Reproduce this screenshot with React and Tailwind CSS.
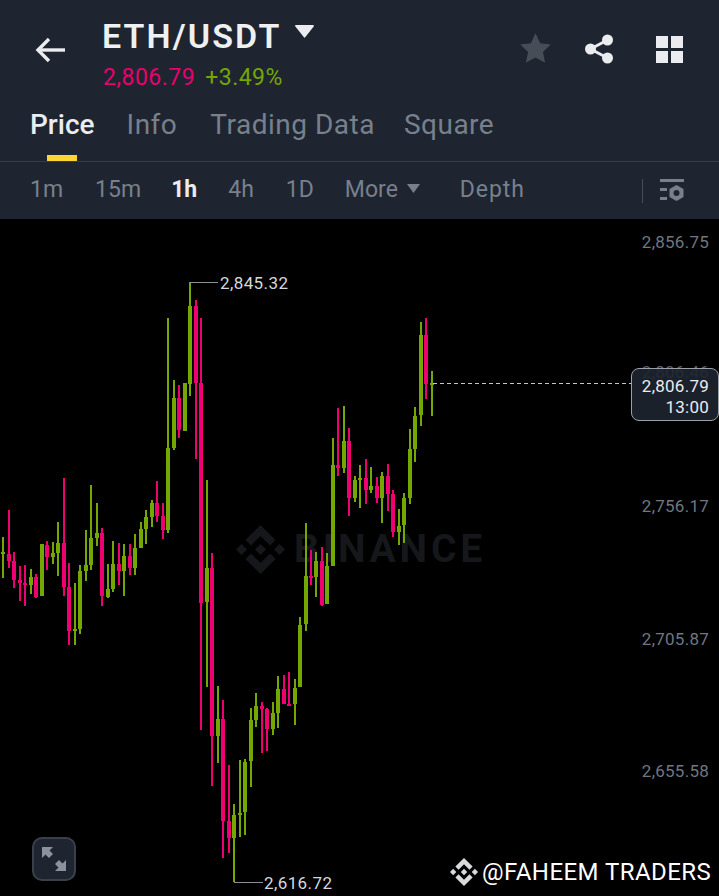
import { Fragment } from 'react';

const PINK = '#ee0070';
const GREEN = '#74a700';

// [x, wickTop, wickBottom, bodyTop, bodyBottom, up]
const candles = [
  [3, 537, 578, 552, 554, 1], [8.5, 510, 568, 554, 561, 0], [14, 552, 588, 561, 580, 0], [19.5, 566, 601, 580, 583, 0],
  [25, 565, 606, 583, 585, 0], [30.5, 569, 594, 577, 585, 1], [36, 574, 598, 577, 597, 0], [41.5, 544, 596, 544, 596, 1],
  [47, 541, 570, 545, 557, 0], [52.5, 542, 564, 553, 557, 1], [58, 522, 576, 543, 553, 1], [63.5, 478, 596, 543, 587, 0],
  [69, 563, 645, 587, 631, 0], [74.5, 583, 645, 629, 631, 1], [80, 565, 634, 571, 629, 1], [85.5, 530, 581, 565, 571, 1],
  [91, 485, 570, 538, 565, 1], [96.5, 503, 546, 533, 538, 1], [102, 528, 606, 533, 596, 0], [107.5, 564, 598, 589, 597, 1],
  [113, 541, 592, 564, 589, 1], [118.5, 543, 585, 564, 571, 0], [124, 544, 596, 556, 571, 1], [129.5, 544, 575, 556, 568, 0],
  [135, 534, 575, 548, 568, 1], [140.5, 522, 548, 529, 548, 1], [146, 510, 544, 517, 529, 1], [151.5, 500, 527, 503, 517, 1],
  [157, 481, 522, 503, 516, 0], [162.5, 503, 539, 516, 530, 0], [168, 318, 533, 448, 530, 1], [173.5, 380, 450, 398, 448, 1],
  [179, 385, 438, 398, 430, 0], [184.5, 383, 431, 383, 431, 1], [190, 282, 396, 306, 384, 1], [195.5, 300, 459, 306, 383, 0],
  [201, 318, 730, 383, 603, 0], [206.5, 480, 687, 568, 602, 1], [212, 553, 786, 568, 736, 0], [217.5, 686, 763, 719, 736, 1],
  [223, 700, 858, 719, 821, 0], [228.5, 765, 853, 821, 838, 0], [234, 804, 882, 815, 838, 1], [239.5, 760, 837, 813, 815, 1],
  [245, 759, 835, 762, 812, 1], [250.5, 708, 787, 720, 761, 1], [256, 693, 727, 706, 720, 1], [261.5, 702, 753, 706, 709, 0],
  [267, 708, 751, 709, 729, 0], [272.5, 702, 735, 713, 729, 1], [278, 676, 728, 689, 713, 1], [283.5, 675, 704, 689, 704, 0],
  [289, 672, 706, 704, 706, 0], [294.5, 679, 725, 688, 704, 1], [300, 617, 687, 625, 687, 1], [305.5, 523, 631, 576, 624, 1],
  [310.5, 550, 585, 576, 578, 0], [316, 552, 597, 561, 577, 1], [321.5, 547, 606, 561, 605, 0], [327, 553, 604, 566, 604, 1],
  [332.5, 438, 566, 465, 566, 1], [338, 408, 476, 465, 468, 0], [343.5, 406, 473, 441, 468, 1], [349, 428, 516, 441, 498, 0],
  [354.5, 476, 502, 480, 498, 1], [360, 465, 508, 478, 480, 1], [365.5, 459, 504, 478, 490, 0], [371, 467, 493, 486, 490, 1],
  [376.5, 477, 503, 486, 498, 0], [382, 472, 523, 476, 498, 1], [387.5, 464, 511, 476, 494, 0], [393, 490, 537, 494, 532, 0],
  [398.5, 509, 545, 526, 532, 1], [404, 493, 543, 498, 525, 1], [409.5, 429, 504, 449, 498, 1], [415, 407, 462, 416, 449, 1],
  [420.5, 322, 426, 335, 415, 1], [426, 318, 399, 335, 384, 0], [431.5, 371, 416, 383, 384, 1],
];

const axisLabels = [
  { text: '2,856.75', top: 13 },
  { text: '2,756.17', top: 277 },
  { text: '2,705.87', top: 410 },
  { text: '2,655.58', top: 542 },
];

function BinanceLogo({ className, fill }) {
  return (
    <svg viewBox="0 0 126.61 126.61" className={className} fill={fill}>
      <path d="M38.73 53.2l24.59-24.58 24.6 24.6 14.3-14.31L63.32 0 24.42 38.9l14.31 14.3z" />
      <path d="M0 63.31l14.3-14.31 14.31 14.31-14.31 14.3z" />
      <path d="M38.73 73.41l24.59 24.59 24.6-24.6 14.31 14.29-38.9 38.91-38.91-38.88v-.03l14.31-14.28z" />
      <path d="M98.28 63.31l14.3-14.31 14.31 14.3-14.31 14.3z" />
      <path d="M77.83 63.3L63.32 48.78 52.59 59.51l-1.24 1.23-2.54 2.54 14.51 14.5 14.51-14.47z" />
    </svg>
  );
}

function Candles() {
  // y values above are page coordinates, chart starts at y=219
  return (
    <svg width="719" height="677" viewBox="0 219 719 677" className="absolute left-0 top-0">
      {candles.map(([x, wt, wb, bt, bb, up], i) => {
        const color = up ? GREEN : PINK;
        return (
          <Fragment key={i}>
            <rect x={Math.round(x) - 1} y={wt} width="2" height={wb - wt} fill={color} />
            <rect x={Math.round(x) - 2} y={bt} width="4" height={Math.max(bb - bt, 2)} fill={color} />
          </Fragment>
        );
      })}
      <path d="M190 282.5H218" stroke="#8a9099" strokeWidth="1" />
      <path d="M234 882.5H263" stroke="#8a9099" strokeWidth="1" />
      <path d="M433 383.5H631" stroke="#c4c8cc" strokeWidth="1" strokeDasharray="4 3" />
    </svg>
  );
}

export default function App() {
  return (
    <div className="w-[719px] h-[896px] flex flex-col bg-black overflow-hidden" style={{ fontFamily: 'Roboto, "Noto Sans", sans-serif' }}>
      <div className="h-[219px] shrink-0 bg-[#1e2530] flex flex-col">
        {/* Title row */}
        <div className="h-[100px] flex">
          <div className="w-[102px] pl-[35px] pt-[37px] shrink-0">
            <svg width="31" height="26" viewBox="0 0 31 26" fill="none" stroke="#eaecef" strokeWidth="3.4">
              <path d="M30 13H3" />
              <path d="M14 2L3 13l11 11" />
            </svg>
          </div>
          <div className="flex-1 pt-[15px]">
            <div className="flex items-start">
              <span className="text-[34px] leading-[42px] font-semibold text-[#eef0f2] tracking-[2.100px]">ETH/USDT</span>
              <svg width="19" height="14" viewBox="0 0 19 14" className="ml-[14px] mt-[9px]" fill="#eaecef">
                <path d="M1 1h17a1 1 0 0 1 .7 1.6L10.4 13a1 1 0 0 1-1.7 0L.4 2.6A1 1 0 0 1 1 1z" />
              </svg>
            </div>
            <div className="flex mt-[7px] pl-px text-[23px] leading-[28px] tracking-[0.5px]">
              <span style={{ color: '#e8006c' }}>2,806.79</span>
              <span className="ml-[10px]" style={{ color: GREEN }}>+3.49%</span>
            </div>
          </div>
          <div className="flex pt-[32px] pr-[36px] shrink-0">
            <svg width="35" height="35" viewBox="0 0 24 24" fill="#474d57" className="-mt-[1px]">
              <path d="M12 1.5l3.2 6.9 7.3.9-5.4 5.1 1.5 7.4L12 18.1l-6.6 3.7 1.5-7.4L1.500 9.300l7.300-.9z" />
            </svg>
            <svg width="30" height="32" viewBox="0 0 30 32" fill="#eaecef" stroke="#eaecef" className="ml-[31px] mt-[1px]">
              <circle cx="6.500" cy="16" r="5.500" stroke="none" />
              <circle cx="23.500" cy="7" r="5.500" stroke="none" />
              <circle cx="23.500" cy="25" r="5.500" stroke="none" />
              <path d="M6.500 16L23.500 7M6.500 16l17 9" strokeWidth="3" fill="none" />
            </svg>
            <div className="ml-[42px] mt-[4px] grid grid-cols-2 gap-[3px] w-[27px] h-[27px]">
              <div className="bg-[#eaecef] h-[12px]" />
              <div className="bg-[#eaecef] h-[12px]" />
              <div className="bg-[#eaecef] h-[12px]" />
              <div className="bg-[#eaecef] h-[12px]" />
            </div>
          </div>
        </div>

        {/* Tabs */}
        <div className="h-[62px] border-b border-[#363c45] flex pl-[30px] items-start text-[28px] leading-[50px] text-[#78808c] tracking-[0.5px]">
          <div className="flex flex-col items-center tracking-normal">
            <span className="text-[#eaecef] font-medium">Price</span>
            <div className="w-[30px] h-[6px] bg-[#fcd535] mt-[5px]" />
          </div>
          <span className="ml-[32px]">Info</span>
          <span className="ml-[33px]">Trading Data</span>
          <span className="ml-[29px]">Square</span>
        </div>

        {/* Interval bar */}
        <div className="flex-1 flex items-center pl-[30px] text-[23px] text-[#78808c]">
          <span>1m</span>
          <span className="ml-[32px]">15m</span>
          <span className="ml-[30px] text-[#eaecef] font-bold">1h</span>
          <span className="ml-[31px]">4h</span>
          <span className="ml-[32px]">1D</span>
          <span className="ml-[31px]">More</span>
          <svg width="13" height="10" viewBox="0 0 13 10" className="ml-[9px] -mt-[4px]" fill="#78808c">
            <path d="M0 0h13L6.500 9z" />
          </svg>
          <span className="ml-[40px] tracking-[0.9px]">Depth</span>
          <div className="ml-auto w-px h-[24px] bg-[#474d57]" />
          <svg width="24" height="24" viewBox="0 0 24 24" fill="#78808c" className="ml-[17px] mr-[35px]">
            <rect x="0" y="0" width="24" height="3" />
            <rect x="0" y="9" width="7" height="3" />
            <rect x="0" y="18" width="7" height="3" />
            <path fillRule="evenodd" d="M16.500 6l7 4v8l-7 4-7-4v-8zM16.500 11a3 3 0 1 0 0 6 3 3 0 0 0 0-6z" />
          </svg>
        </div>
      </div>

      {/* Chart */}
      <div className="flex-1 relative bg-black">
        {/* watermark */}
        <div className="absolute left-[236px] top-[306px] flex items-center text-[#15171a]">
          <BinanceLogo className="w-[49px] h-[49px]" fill="#15171a" />
          <span className="ml-[9px] text-[39px] leading-[49px] font-bold tracking-[3.800px]">BINANCE</span>
        </div>

        <Candles />

        {axisLabels.map(l => (
          <div key={l.text} className="absolute right-[10px] text-[17px] leading-[20px] tracking-[0.25px] text-[#6f7780]" style={{ top: l.top }}>
            {l.text}
          </div>
        ))}

        <div className="absolute left-[220px] top-[54px] text-[17px] leading-[20px] tracking-[0.4px] text-[#d5d8dc]">2,845.32</div>
        <div className="absolute left-[264px] top-[654px] text-[17px] leading-[20px] tracking-[0.4px] text-[#d5d8dc]">2,616.72</div>

        {/* current price tag */}
        <div className="absolute right-[10px] top-[143px] text-[17px] leading-[20px] tracking-[0.25px] text-[#5a6068]">2,806.46</div>
        <div className="absolute left-[631px] top-[149px] w-[88px] h-[53px] rounded-[8px] border border-[#9aa0a6] bg-[#1e2530]/90 pr-[9px] pt-[7px] text-right text-[17px] leading-[21px] tracking-[0.25px] text-[#eaecef]">
          <div>2,806.79</div>
          <div>13:00</div>
        </div>

        {/* expand button */}
        <div className="absolute left-[32px] top-[618px] w-[44px] h-[44px] rounded-[10px] border-2 border-[#3a404a] bg-[#1e2530] flex items-center justify-center">
          <svg width="26" height="26" viewBox="0 0 26 26" fill="#8a929e">
            <path d="M0 0h11L7.500 3.500 11 7 7 11 3.500 7.500 0 11z" transform="translate(1 1)" />
            <path d="M11 11H0l3.500-3.500L0 4l4-4 3.500 3.500L11 0z" transform="translate(14 14)" />
          </svg>
        </div>

        {/* credit */}
        <div className="absolute left-[450px] top-[638px] flex items-center">
          <BinanceLogo className="w-[28px] h-[28px]" fill="#d8dadd" />
          <span className="ml-[4px] text-[24px] leading-[30px] tracking-[0.45px] text-white">@FAHEEM TRADERS</span>
        </div>
      </div>
    </div>
  );
}
